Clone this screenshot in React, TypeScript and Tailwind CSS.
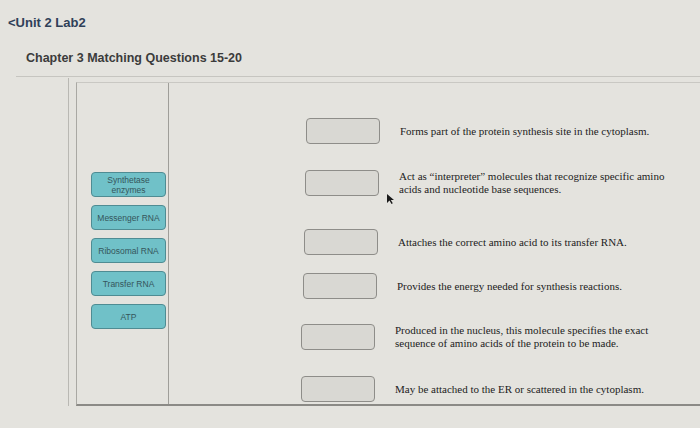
import React from "react";

const terms = ["Synthetase enzymes", "Messenger RNA", "Ribosomal RNA", "Transfer RNA", "ATP"];

type Row = { text: string[]; mt: string; shift: string };

const rows: Row[] = [
  { text: ["Forms part of the protein synthesis site in the cytoplasm."], mt: "mt-[35px]", shift: "ml-[137px]" },
  {
    text: [
      "Act as \u201cinterpreter\u201d molecules that recognize specific amino",
      "acids and nucleotide base sequences.",
    ],
    mt: "mt-[26px]",
    shift: "ml-[136px]",
  },
  { text: ["Attaches the correct amino acid to its transfer RNA."], mt: "mt-[33px]", shift: "ml-[135px]" },
  { text: ["Provides the energy needed for synthesis reactions."], mt: "mt-[18px]", shift: "ml-[134px]" },
  {
    text: [
      "Produced in the nucleus, this molecule specifies the exact",
      "sequence of amino acids of the protein to be made.",
    ],
    mt: "mt-[25px]",
    shift: "ml-[132px]",
  },
  { text: ["May be attached to the ER or scattered in the cytoplasm."], mt: "mt-[26px]", shift: "ml-[132px]" },
];

function Chip({ label }: { label: string }) {
  return (
    <div className="w-[75px] min-h-[25px] flex items-center justify-center rounded-[4px] border border-[#4f8c93] bg-[#70c1c8] px-1 text-center text-[8.5px] leading-[10px] text-[#35555b] [font-family:'Liberation_Sans',Arial,sans-serif]">
      {label}
    </div>
  );
}

function AnswerRow({ row }: { row: Row }) {
  return (
    <div className={`flex items-center ${row.mt} ${row.shift}`}>
      <div className="h-[26px] w-[74px] shrink-0 rounded-[4px] border border-[#8e8d89] bg-[#d9d8d3]" />
      <div className="ml-[20px] text-[11px] leading-[13px] text-[#1c1c1c] [font-family:'Liberation_Serif','Times_New_Roman',serif]">
        {row.text.map((t) => (
          <div key={t}>{t}</div>
        ))}
      </div>
    </div>
  );
}

export default function App() {
  return (
    <div className="relative h-[428px] w-[700px] overflow-hidden bg-[#e4e3de] [font-family:'Liberation_Sans',Arial,sans-serif]">
      <div className="pl-[8px] pt-[16px] text-[13px] font-bold leading-[14px] text-[#2f4058]">
        &lt;Unit 2 Lab2
      </div>
      <div className="mt-[20px] pl-[26px] text-[12.5px] font-bold leading-[16px] text-[#3b3b3b]">
        Chapter 3 Matching Questions 15-20
      </div>
      <div className="ml-[16px] mt-[10px] border-t border-[#c6c5c0]" />

      <div className="ml-[68px] mt-[1px] border-l border-[#b9b8b3] pl-[7px] pt-[4px]">
        <div className="flex h-[324px] border-b-2 border-l border-t border-b-[#8b8a86] border-l-[#a9a8a3] border-t-[#c9c8c3]">
          <div className="flex w-[92px] shrink-0 flex-col gap-[8px] border-r border-[#9f9e99] pl-[14px] pt-[89px]">
            {terms.map((t) => (
              <Chip key={t} label={t} />
            ))}
          </div>
          <div className="flex-1">
            {rows.map((r, i) => (
              <AnswerRow key={i} row={r} />
            ))}
          </div>
        </div>
      </div>

      {/* mouse pointer */}
      <svg className="absolute left-[386px] top-[193px]" width="9" height="12" viewBox="0 0 9 12">
        <path d="M1 1 L1 10 L3.5 7.5 L5.5 11 L6.8 10.3 L4.8 7 L8 7 Z" fill="#1a1a1a" />
      </svg>
    </div>
  );
}
